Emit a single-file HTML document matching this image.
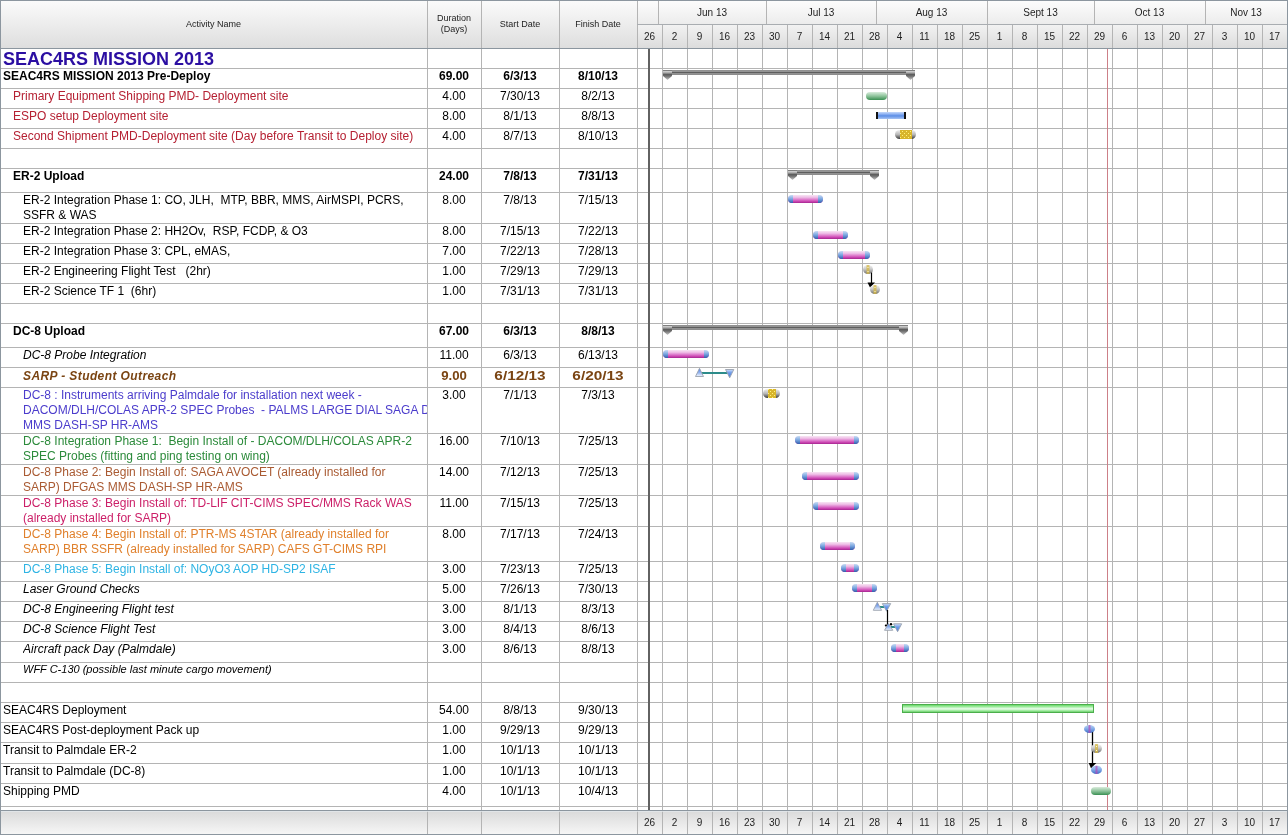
<!DOCTYPE html>
<html><head><meta charset="utf-8"><style>
html,body{margin:0;padding:0;}
body{width:1288px;height:835px;position:relative;overflow:hidden;background:#fff;font-family:"Liberation Sans",sans-serif;font-size:12px;color:#000;}
.a{position:absolute;}
.hl{position:absolute;height:1px;background:#b4b4b4;}
.vl{position:absolute;width:1px;background:#b4b4b4;}
.t{position:absolute;white-space:nowrap;line-height:15px;}
.c{position:absolute;text-align:center;line-height:15px;white-space:nowrap;}
.hd{position:absolute;font-size:9px;color:#1e1e1e;text-align:center;white-space:nowrap;line-height:11px;}
.t,.c,.hd{will-change:transform;}
</style></head><body>

<div class="a" style="left:0;top:0;width:1288px;height:48px;background:linear-gradient(#fbfbfb,#dedede);"></div>
<div class="a" style="left:638px;top:1px;width:650px;height:23px;background:linear-gradient(#fcfcfc,#ececec);"></div>
<div class="a" style="left:638px;top:25px;width:650px;height:23px;background:linear-gradient(#f2f2f2,#dcdcdc);"></div>
<div class="a" style="left:0;top:810px;width:1288px;height:25px;background:linear-gradient(#d9d9d9,#f7f7f7);"></div>
<div class="hl" style="left:0;top:48px;width:1288px;"></div>
<div class="hl" style="left:0;top:68px;width:1288px;"></div>
<div class="hl" style="left:0;top:88px;width:1288px;"></div>
<div class="hl" style="left:0;top:108px;width:1288px;"></div>
<div class="hl" style="left:0;top:128px;width:1288px;"></div>
<div class="hl" style="left:0;top:148px;width:1288px;"></div>
<div class="hl" style="left:0;top:168px;width:1288px;"></div>
<div class="hl" style="left:0;top:192px;width:1288px;"></div>
<div class="hl" style="left:0;top:223px;width:1288px;"></div>
<div class="hl" style="left:0;top:243px;width:1288px;"></div>
<div class="hl" style="left:0;top:263px;width:1288px;"></div>
<div class="hl" style="left:0;top:283px;width:1288px;"></div>
<div class="hl" style="left:0;top:303px;width:1288px;"></div>
<div class="hl" style="left:0;top:323px;width:1288px;"></div>
<div class="hl" style="left:0;top:347px;width:1288px;"></div>
<div class="hl" style="left:0;top:367px;width:1288px;"></div>
<div class="hl" style="left:0;top:387px;width:1288px;"></div>
<div class="hl" style="left:0;top:433px;width:1288px;"></div>
<div class="hl" style="left:0;top:464px;width:1288px;"></div>
<div class="hl" style="left:0;top:495px;width:1288px;"></div>
<div class="hl" style="left:0;top:526px;width:1288px;"></div>
<div class="hl" style="left:0;top:561px;width:1288px;"></div>
<div class="hl" style="left:0;top:581px;width:1288px;"></div>
<div class="hl" style="left:0;top:601px;width:1288px;"></div>
<div class="hl" style="left:0;top:621px;width:1288px;"></div>
<div class="hl" style="left:0;top:641px;width:1288px;"></div>
<div class="hl" style="left:0;top:662px;width:1288px;"></div>
<div class="hl" style="left:0;top:682px;width:1288px;"></div>
<div class="hl" style="left:0;top:702px;width:1288px;"></div>
<div class="hl" style="left:0;top:722px;width:1288px;"></div>
<div class="hl" style="left:0;top:742px;width:1288px;"></div>
<div class="hl" style="left:0;top:763px;width:1288px;"></div>
<div class="hl" style="left:0;top:783px;width:1288px;"></div>
<div class="hl" style="left:0;top:806px;width:1288px;"></div>
<div class="vl" style="left:427px;top:1px;height:834px;"></div>
<div class="vl" style="left:481px;top:1px;height:834px;"></div>
<div class="vl" style="left:559px;top:1px;height:834px;"></div>
<div class="vl" style="left:637px;top:1px;height:834px;"></div>
<div class="vl" style="left:662px;top:25px;height:810px;"></div>
<div class="vl" style="left:687px;top:25px;height:810px;"></div>
<div class="vl" style="left:712px;top:25px;height:810px;"></div>
<div class="vl" style="left:737px;top:25px;height:810px;"></div>
<div class="vl" style="left:762px;top:25px;height:810px;"></div>
<div class="vl" style="left:787px;top:25px;height:810px;"></div>
<div class="vl" style="left:812px;top:25px;height:810px;"></div>
<div class="vl" style="left:837px;top:25px;height:810px;"></div>
<div class="vl" style="left:862px;top:25px;height:810px;"></div>
<div class="vl" style="left:887px;top:25px;height:810px;"></div>
<div class="vl" style="left:912px;top:25px;height:810px;"></div>
<div class="vl" style="left:937px;top:25px;height:810px;"></div>
<div class="vl" style="left:962px;top:25px;height:810px;"></div>
<div class="vl" style="left:987px;top:25px;height:810px;"></div>
<div class="vl" style="left:1012px;top:25px;height:810px;"></div>
<div class="vl" style="left:1037px;top:25px;height:810px;"></div>
<div class="vl" style="left:1062px;top:25px;height:810px;"></div>
<div class="vl" style="left:1087px;top:25px;height:810px;"></div>
<div class="vl" style="left:1112px;top:25px;height:810px;"></div>
<div class="vl" style="left:1137px;top:25px;height:810px;"></div>
<div class="vl" style="left:1162px;top:25px;height:810px;"></div>
<div class="vl" style="left:1187px;top:25px;height:810px;"></div>
<div class="vl" style="left:1212px;top:25px;height:810px;"></div>
<div class="vl" style="left:1237px;top:25px;height:810px;"></div>
<div class="vl" style="left:1262px;top:25px;height:810px;"></div>
<div class="vl" style="left:658px;top:1px;height:23px;"></div>
<div class="vl" style="left:766px;top:1px;height:23px;"></div>
<div class="vl" style="left:876px;top:1px;height:23px;"></div>
<div class="vl" style="left:987px;top:1px;height:23px;"></div>
<div class="vl" style="left:1094px;top:1px;height:23px;"></div>
<div class="vl" style="left:1205px;top:1px;height:23px;"></div>
<div class="hl" style="left:637px;top:24px;width:651px;background:#a9adb1;"></div>
<div class="a" style="left:0;top:0;width:1288px;height:1px;background:#8c969f;"></div>
<div class="a" style="left:0;top:48px;width:1288px;height:1px;background:#8c969f;"></div>
<div class="a" style="left:0;top:810px;width:1288px;height:1px;background:#8c969f;"></div>
<div class="a" style="left:1px;top:811px;width:1286px;height:1px;background:rgba(228,233,238,0.7);"></div>
<div class="a" style="left:0;top:834px;width:1288px;height:1px;background:#8c969f;"></div>
<div class="a" style="left:0;top:0;width:1px;height:835px;background:#8c969f;"></div>
<div class="a" style="left:1287px;top:0;width:1px;height:835px;background:#8c969f;"></div>
<div class="hd" style="left:0;top:19px;width:427px;">Activity Name</div>
<div class="hd" style="left:427px;top:13px;width:54px;">Duration<br>(Days)</div>
<div class="hd" style="left:481px;top:19px;width:78px;">Start Date</div>
<div class="hd" style="left:559px;top:19px;width:78px;">Finish Date</div>
<div class="hd" style="left:658px;top:7px;width:108px;font-size:10px;line-height:12px;">Jun 13</div>
<div class="hd" style="left:766px;top:7px;width:110px;font-size:10px;line-height:12px;">Jul 13</div>
<div class="hd" style="left:876px;top:7px;width:111px;font-size:10px;line-height:12px;">Aug 13</div>
<div class="hd" style="left:987px;top:7px;width:107px;font-size:10px;line-height:12px;">Sept 13</div>
<div class="hd" style="left:1094px;top:7px;width:111px;font-size:10px;line-height:12px;">Oct 13</div>
<div class="hd" style="left:1205px;top:7px;width:82px;font-size:10px;line-height:12px;">Nov 13</div>
<div class="hd" style="left:637px;top:31px;width:25px;font-size:10px;line-height:12px;">26</div>
<div class="hd" style="left:637px;top:817px;width:25px;font-size:10px;line-height:12px;">26</div>
<div class="hd" style="left:662px;top:31px;width:25px;font-size:10px;line-height:12px;">2</div>
<div class="hd" style="left:662px;top:817px;width:25px;font-size:10px;line-height:12px;">2</div>
<div class="hd" style="left:687px;top:31px;width:25px;font-size:10px;line-height:12px;">9</div>
<div class="hd" style="left:687px;top:817px;width:25px;font-size:10px;line-height:12px;">9</div>
<div class="hd" style="left:712px;top:31px;width:25px;font-size:10px;line-height:12px;">16</div>
<div class="hd" style="left:712px;top:817px;width:25px;font-size:10px;line-height:12px;">16</div>
<div class="hd" style="left:737px;top:31px;width:25px;font-size:10px;line-height:12px;">23</div>
<div class="hd" style="left:737px;top:817px;width:25px;font-size:10px;line-height:12px;">23</div>
<div class="hd" style="left:762px;top:31px;width:25px;font-size:10px;line-height:12px;">30</div>
<div class="hd" style="left:762px;top:817px;width:25px;font-size:10px;line-height:12px;">30</div>
<div class="hd" style="left:787px;top:31px;width:25px;font-size:10px;line-height:12px;">7</div>
<div class="hd" style="left:787px;top:817px;width:25px;font-size:10px;line-height:12px;">7</div>
<div class="hd" style="left:812px;top:31px;width:25px;font-size:10px;line-height:12px;">14</div>
<div class="hd" style="left:812px;top:817px;width:25px;font-size:10px;line-height:12px;">14</div>
<div class="hd" style="left:837px;top:31px;width:25px;font-size:10px;line-height:12px;">21</div>
<div class="hd" style="left:837px;top:817px;width:25px;font-size:10px;line-height:12px;">21</div>
<div class="hd" style="left:862px;top:31px;width:25px;font-size:10px;line-height:12px;">28</div>
<div class="hd" style="left:862px;top:817px;width:25px;font-size:10px;line-height:12px;">28</div>
<div class="hd" style="left:887px;top:31px;width:25px;font-size:10px;line-height:12px;">4</div>
<div class="hd" style="left:887px;top:817px;width:25px;font-size:10px;line-height:12px;">4</div>
<div class="hd" style="left:912px;top:31px;width:25px;font-size:10px;line-height:12px;">11</div>
<div class="hd" style="left:912px;top:817px;width:25px;font-size:10px;line-height:12px;">11</div>
<div class="hd" style="left:937px;top:31px;width:25px;font-size:10px;line-height:12px;">18</div>
<div class="hd" style="left:937px;top:817px;width:25px;font-size:10px;line-height:12px;">18</div>
<div class="hd" style="left:962px;top:31px;width:25px;font-size:10px;line-height:12px;">25</div>
<div class="hd" style="left:962px;top:817px;width:25px;font-size:10px;line-height:12px;">25</div>
<div class="hd" style="left:987px;top:31px;width:25px;font-size:10px;line-height:12px;">1</div>
<div class="hd" style="left:987px;top:817px;width:25px;font-size:10px;line-height:12px;">1</div>
<div class="hd" style="left:1012px;top:31px;width:25px;font-size:10px;line-height:12px;">8</div>
<div class="hd" style="left:1012px;top:817px;width:25px;font-size:10px;line-height:12px;">8</div>
<div class="hd" style="left:1037px;top:31px;width:25px;font-size:10px;line-height:12px;">15</div>
<div class="hd" style="left:1037px;top:817px;width:25px;font-size:10px;line-height:12px;">15</div>
<div class="hd" style="left:1062px;top:31px;width:25px;font-size:10px;line-height:12px;">22</div>
<div class="hd" style="left:1062px;top:817px;width:25px;font-size:10px;line-height:12px;">22</div>
<div class="hd" style="left:1087px;top:31px;width:25px;font-size:10px;line-height:12px;">29</div>
<div class="hd" style="left:1087px;top:817px;width:25px;font-size:10px;line-height:12px;">29</div>
<div class="hd" style="left:1112px;top:31px;width:25px;font-size:10px;line-height:12px;">6</div>
<div class="hd" style="left:1112px;top:817px;width:25px;font-size:10px;line-height:12px;">6</div>
<div class="hd" style="left:1137px;top:31px;width:25px;font-size:10px;line-height:12px;">13</div>
<div class="hd" style="left:1137px;top:817px;width:25px;font-size:10px;line-height:12px;">13</div>
<div class="hd" style="left:1162px;top:31px;width:25px;font-size:10px;line-height:12px;">20</div>
<div class="hd" style="left:1162px;top:817px;width:25px;font-size:10px;line-height:12px;">20</div>
<div class="hd" style="left:1187px;top:31px;width:25px;font-size:10px;line-height:12px;">27</div>
<div class="hd" style="left:1187px;top:817px;width:25px;font-size:10px;line-height:12px;">27</div>
<div class="hd" style="left:1212px;top:31px;width:25px;font-size:10px;line-height:12px;">3</div>
<div class="hd" style="left:1212px;top:817px;width:25px;font-size:10px;line-height:12px;">3</div>
<div class="hd" style="left:1237px;top:31px;width:25px;font-size:10px;line-height:12px;">10</div>
<div class="hd" style="left:1237px;top:817px;width:25px;font-size:10px;line-height:12px;">10</div>
<div class="hd" style="left:1262px;top:31px;width:25px;font-size:10px;line-height:12px;">17</div>
<div class="hd" style="left:1262px;top:817px;width:25px;font-size:10px;line-height:12px;">17</div>
<div class="t" style="left:3px;top:49px;font-weight:bold;font-size:18px;color:#2b0ea2;line-height:20px;">SEAC4RS MISSION 2013</div>
<div class="t" style="left:3px;top:69px;width:424px;overflow:hidden;font-weight:bold;color:#000;">SEAC4RS MISSION 2013 Pre-Deploy</div>
<div class="c" style="left:427px;top:69px;width:54px;font-weight:bold;color:#000;">69.00</div>
<div class="c" style="left:481px;top:69px;width:78px;font-weight:bold;color:#000;">6/3/13</div>
<div class="c" style="left:559px;top:69px;width:78px;font-weight:bold;color:#000;">8/10/13</div>
<div class="t" style="left:13px;top:89px;width:414px;overflow:hidden;color:#b52032;">Primary Equipment Shipping PMD- Deployment site</div>
<div class="c" style="left:427px;top:89px;width:54px;color:#000;">4.00</div>
<div class="c" style="left:481px;top:89px;width:78px;color:#000;">7/30/13</div>
<div class="c" style="left:559px;top:89px;width:78px;color:#000;">8/2/13</div>
<div class="t" style="left:13px;top:109px;width:414px;overflow:hidden;color:#b52032;">ESPO setup Deployment site</div>
<div class="c" style="left:427px;top:109px;width:54px;color:#000;">8.00</div>
<div class="c" style="left:481px;top:109px;width:78px;color:#000;">8/1/13</div>
<div class="c" style="left:559px;top:109px;width:78px;color:#000;">8/8/13</div>
<div class="t" style="left:13px;top:129px;width:414px;overflow:hidden;color:#b52032;">Second Shipment PMD-Deployment site (Day before Transit to Deploy site)</div>
<div class="c" style="left:427px;top:129px;width:54px;color:#000;">4.00</div>
<div class="c" style="left:481px;top:129px;width:78px;color:#000;">8/7/13</div>
<div class="c" style="left:559px;top:129px;width:78px;color:#000;">8/10/13</div>
<div class="t" style="left:13px;top:169px;width:414px;overflow:hidden;font-weight:bold;color:#000;">ER-2 Upload</div>
<div class="c" style="left:427px;top:169px;width:54px;font-weight:bold;color:#000;">24.00</div>
<div class="c" style="left:481px;top:169px;width:78px;font-weight:bold;color:#000;">7/8/13</div>
<div class="c" style="left:559px;top:169px;width:78px;font-weight:bold;color:#000;">7/31/13</div>
<div class="t" style="left:23px;top:193px;width:404px;overflow:hidden;color:#000;">ER-2 Integration Phase 1: CO, JLH,&nbsp; MTP, BBR, MMS, AirMSPI, PCRS,<br>SSFR &amp; WAS</div>
<div class="c" style="left:427px;top:193px;width:54px;color:#000;">8.00</div>
<div class="c" style="left:481px;top:193px;width:78px;color:#000;">7/8/13</div>
<div class="c" style="left:559px;top:193px;width:78px;color:#000;">7/15/13</div>
<div class="t" style="left:23px;top:224px;width:404px;overflow:hidden;color:#000;">ER-2 Integration Phase 2: HH2Ov,&nbsp; RSP, FCDP, &amp; O3</div>
<div class="c" style="left:427px;top:224px;width:54px;color:#000;">8.00</div>
<div class="c" style="left:481px;top:224px;width:78px;color:#000;">7/15/13</div>
<div class="c" style="left:559px;top:224px;width:78px;color:#000;">7/22/13</div>
<div class="t" style="left:23px;top:244px;width:404px;overflow:hidden;color:#000;">ER-2 Integration Phase 3: CPL, eMAS,</div>
<div class="c" style="left:427px;top:244px;width:54px;color:#000;">7.00</div>
<div class="c" style="left:481px;top:244px;width:78px;color:#000;">7/22/13</div>
<div class="c" style="left:559px;top:244px;width:78px;color:#000;">7/28/13</div>
<div class="t" style="left:23px;top:264px;width:404px;overflow:hidden;color:#000;">ER-2 Engineering Flight Test &nbsp; (2hr)</div>
<div class="c" style="left:427px;top:264px;width:54px;color:#000;">1.00</div>
<div class="c" style="left:481px;top:264px;width:78px;color:#000;">7/29/13</div>
<div class="c" style="left:559px;top:264px;width:78px;color:#000;">7/29/13</div>
<div class="t" style="left:23px;top:284px;width:404px;overflow:hidden;color:#000;">ER-2 Science TF 1&nbsp; (6hr)</div>
<div class="c" style="left:427px;top:284px;width:54px;color:#000;">1.00</div>
<div class="c" style="left:481px;top:284px;width:78px;color:#000;">7/31/13</div>
<div class="c" style="left:559px;top:284px;width:78px;color:#000;">7/31/13</div>
<div class="t" style="left:13px;top:324px;width:414px;overflow:hidden;font-weight:bold;color:#000;">DC-8 Upload</div>
<div class="c" style="left:427px;top:324px;width:54px;font-weight:bold;color:#000;">67.00</div>
<div class="c" style="left:481px;top:324px;width:78px;font-weight:bold;color:#000;">6/3/13</div>
<div class="c" style="left:559px;top:324px;width:78px;font-weight:bold;color:#000;">8/8/13</div>
<div class="t" style="left:23px;top:348px;width:404px;overflow:hidden;font-style:italic;color:#000;">DC-8 Probe Integration</div>
<div class="c" style="left:427px;top:348px;width:54px;color:#000;">11.00</div>
<div class="c" style="left:481px;top:348px;width:78px;color:#000;">6/3/13</div>
<div class="c" style="left:559px;top:348px;width:78px;color:#000;">6/13/13</div>
<div class="t" style="left:23px;top:369px;width:404px;overflow:hidden;font-weight:bold;font-style:italic;letter-spacing:0.4px;color:#7a4412;">SARP - Student Outreach</div>
<div class="c" style="left:427px;top:369px;width:54px;font-weight:bold;color:#7a4412;transform:scaleX(1.1);">9.00</div>
<div class="c" style="left:481px;top:369px;width:78px;font-weight:bold;color:#7a4412;transform:scaleX(1.28);">6/12/13</div>
<div class="c" style="left:559px;top:369px;width:78px;font-weight:bold;color:#7a4412;transform:scaleX(1.28);">6/20/13</div>
<div class="t" style="left:23px;top:388px;width:404px;overflow:hidden;color:#4b3ccc;">DC-8 : Instruments arriving Palmdale for installation next week -<br>DACOM/DLH/COLAS APR-2 SPEC Probes&nbsp; - PALMS LARGE DIAL SAGA DFGAS<br>MMS DASH-SP HR-AMS</div>
<div class="c" style="left:427px;top:388px;width:54px;color:#000;">3.00</div>
<div class="c" style="left:481px;top:388px;width:78px;color:#000;">7/1/13</div>
<div class="c" style="left:559px;top:388px;width:78px;color:#000;">7/3/13</div>
<div class="t" style="left:23px;top:434px;width:404px;overflow:hidden;color:#2b8a3a;">DC-8 Integration Phase 1:&nbsp; Begin Install of - DACOM/DLH/COLAS APR-2<br>SPEC Probes (fitting and ping testing on wing)</div>
<div class="c" style="left:427px;top:434px;width:54px;color:#000;">16.00</div>
<div class="c" style="left:481px;top:434px;width:78px;color:#000;">7/10/13</div>
<div class="c" style="left:559px;top:434px;width:78px;color:#000;">7/25/13</div>
<div class="t" style="left:23px;top:465px;width:404px;overflow:hidden;color:#a95a32;">DC-8 Phase 2: Begin Install of: SAGA AVOCET (already installed for<br>SARP) DFGAS MMS DASH-SP HR-AMS</div>
<div class="c" style="left:427px;top:465px;width:54px;color:#000;">14.00</div>
<div class="c" style="left:481px;top:465px;width:78px;color:#000;">7/12/13</div>
<div class="c" style="left:559px;top:465px;width:78px;color:#000;">7/25/13</div>
<div class="t" style="left:23px;top:496px;width:404px;overflow:hidden;color:#cc1f68;">DC-8 Phase 3: Begin Install of: TD-LIF CIT-CIMS SPEC/MMS Rack WAS<br>(already installed for SARP)</div>
<div class="c" style="left:427px;top:496px;width:54px;color:#000;">11.00</div>
<div class="c" style="left:481px;top:496px;width:78px;color:#000;">7/15/13</div>
<div class="c" style="left:559px;top:496px;width:78px;color:#000;">7/25/13</div>
<div class="t" style="left:23px;top:527px;width:404px;overflow:hidden;color:#e0802c;">DC-8 Phase 4: Begin Install of: PTR-MS 4STAR (already installed for<br>SARP) BBR SSFR (already installed for SARP) CAFS GT-CIMS RPI</div>
<div class="c" style="left:427px;top:527px;width:54px;color:#000;">8.00</div>
<div class="c" style="left:481px;top:527px;width:78px;color:#000;">7/17/13</div>
<div class="c" style="left:559px;top:527px;width:78px;color:#000;">7/24/13</div>
<div class="t" style="left:23px;top:562px;width:404px;overflow:hidden;color:#2eb4e4;">DC-8 Phase 5: Begin Install of: NOyO3 AOP HD-SP2 ISAF</div>
<div class="c" style="left:427px;top:562px;width:54px;color:#000;">3.00</div>
<div class="c" style="left:481px;top:562px;width:78px;color:#000;">7/23/13</div>
<div class="c" style="left:559px;top:562px;width:78px;color:#000;">7/25/13</div>
<div class="t" style="left:23px;top:582px;width:404px;overflow:hidden;font-style:italic;color:#000;">Laser Ground Checks</div>
<div class="c" style="left:427px;top:582px;width:54px;color:#000;">5.00</div>
<div class="c" style="left:481px;top:582px;width:78px;color:#000;">7/26/13</div>
<div class="c" style="left:559px;top:582px;width:78px;color:#000;">7/30/13</div>
<div class="t" style="left:23px;top:602px;width:404px;overflow:hidden;font-style:italic;color:#000;">DC-8 Engineering Flight test</div>
<div class="c" style="left:427px;top:602px;width:54px;color:#000;">3.00</div>
<div class="c" style="left:481px;top:602px;width:78px;color:#000;">8/1/13</div>
<div class="c" style="left:559px;top:602px;width:78px;color:#000;">8/3/13</div>
<div class="t" style="left:23px;top:622px;width:404px;overflow:hidden;font-style:italic;color:#000;">DC-8 Science Flight Test</div>
<div class="c" style="left:427px;top:622px;width:54px;color:#000;">3.00</div>
<div class="c" style="left:481px;top:622px;width:78px;color:#000;">8/4/13</div>
<div class="c" style="left:559px;top:622px;width:78px;color:#000;">8/6/13</div>
<div class="t" style="left:23px;top:642px;width:404px;overflow:hidden;font-style:italic;color:#000;">Aircraft pack Day (Palmdale)</div>
<div class="c" style="left:427px;top:642px;width:54px;color:#000;">3.00</div>
<div class="c" style="left:481px;top:642px;width:78px;color:#000;">8/6/13</div>
<div class="c" style="left:559px;top:642px;width:78px;color:#000;">8/8/13</div>
<div class="t" style="left:23px;top:662px;width:404px;overflow:hidden;font-style:italic;font-size:11px;color:#000;">WFF C-130 (possible last minute cargo movement)</div>
<div class="t" style="left:3px;top:703px;width:424px;overflow:hidden;color:#000;">SEAC4RS Deployment</div>
<div class="c" style="left:427px;top:703px;width:54px;color:#000;">54.00</div>
<div class="c" style="left:481px;top:703px;width:78px;color:#000;">8/8/13</div>
<div class="c" style="left:559px;top:703px;width:78px;color:#000;">9/30/13</div>
<div class="t" style="left:3px;top:723px;width:424px;overflow:hidden;color:#000;">SEAC4RS Post-deployment Pack up</div>
<div class="c" style="left:427px;top:723px;width:54px;color:#000;">1.00</div>
<div class="c" style="left:481px;top:723px;width:78px;color:#000;">9/29/13</div>
<div class="c" style="left:559px;top:723px;width:78px;color:#000;">9/29/13</div>
<div class="t" style="left:3px;top:743px;width:424px;overflow:hidden;color:#000;">Transit to Palmdale ER-2</div>
<div class="c" style="left:427px;top:743px;width:54px;color:#000;">1.00</div>
<div class="c" style="left:481px;top:743px;width:78px;color:#000;">10/1/13</div>
<div class="c" style="left:559px;top:743px;width:78px;color:#000;">10/1/13</div>
<div class="t" style="left:3px;top:764px;width:424px;overflow:hidden;color:#000;">Transit to Palmdale (DC-8)</div>
<div class="c" style="left:427px;top:764px;width:54px;color:#000;">1.00</div>
<div class="c" style="left:481px;top:764px;width:78px;color:#000;">10/1/13</div>
<div class="c" style="left:559px;top:764px;width:78px;color:#000;">10/1/13</div>
<div class="t" style="left:3px;top:784px;width:424px;overflow:hidden;color:#000;">Shipping PMD</div>
<div class="c" style="left:427px;top:784px;width:54px;color:#000;">4.00</div>
<div class="c" style="left:481px;top:784px;width:78px;color:#000;">10/1/13</div>
<div class="c" style="left:559px;top:784px;width:78px;color:#000;">10/4/13</div>
<div class="a" style="left:648px;top:49px;width:2px;height:761px;background:#626262;"></div>
<div class="a" style="left:1107px;top:49px;width:1px;height:761px;background:#cd8088;"></div>
<svg class="a" style="left:0;top:0;" width="1288" height="835" viewBox="0 0 1288 835">
<defs>
<linearGradient id="gPink" x1="0" y1="0" x2="0" y2="1">
 <stop offset="0" stop-color="#f8e6f4"/><stop offset="0.3" stop-color="#eebce6"/><stop offset="0.65" stop-color="#d868c4"/><stop offset="0.88" stop-color="#c234a6"/><stop offset="1" stop-color="#9c2a8c"/>
</linearGradient>
<linearGradient id="gBlueCap" x1="0" y1="0" x2="0" y2="1">
 <stop offset="0" stop-color="#c8dcf4"/><stop offset="0.5" stop-color="#7aa6e0"/><stop offset="1" stop-color="#2f5fae"/>
</linearGradient>
<linearGradient id="gGreen" x1="0" y1="0" x2="0" y2="1">
 <stop offset="0" stop-color="#d9ecdc"/><stop offset="0.5" stop-color="#8fc49c"/><stop offset="1" stop-color="#3a8f52"/>
</linearGradient>
<linearGradient id="gEspo" x1="0" y1="0" x2="0" y2="1">
 <stop offset="0" stop-color="#c4d8fa"/><stop offset="0.3" stop-color="#8fb2f2"/><stop offset="0.55" stop-color="#5c8ee6"/><stop offset="1" stop-color="#a8c4f4"/>
</linearGradient>
<linearGradient id="gGrayCap" x1="0" y1="0" x2="0" y2="1">
 <stop offset="0" stop-color="#f0f0f0"/><stop offset="0.5" stop-color="#b8b8b8"/><stop offset="1" stop-color="#3c3c3c"/>
</linearGradient>
<linearGradient id="gSum" x1="0" y1="0" x2="0" y2="1">
 <stop offset="0" stop-color="#828282"/><stop offset="0.2" stop-color="#a0a0a0"/><stop offset="0.4" stop-color="#888888"/><stop offset="0.5" stop-color="#5e5e5e"/><stop offset="0.62" stop-color="#8a8a8a"/><stop offset="0.8" stop-color="#9c9c9c"/><stop offset="1" stop-color="#7e7e7e"/>
</linearGradient>
<linearGradient id="gMark" x1="0" y1="0" x2="0" y2="1">
 <stop offset="0" stop-color="#6a6a6a"/><stop offset="0.08" stop-color="#8c8c8c"/><stop offset="0.14" stop-color="#cccccc"/><stop offset="0.28" stop-color="#a6a6a6"/><stop offset="0.45" stop-color="#5e5e5e"/><stop offset="0.6" stop-color="#6e6e6e"/><stop offset="0.8" stop-color="#999999"/><stop offset="1" stop-color="#c8c8c8"/>
</linearGradient>
<linearGradient id="gTube" x1="0" y1="0" x2="0" y2="1">
 <stop offset="0" stop-color="#5cd05c"/><stop offset="0.2" stop-color="#8ae68a"/><stop offset="0.55" stop-color="#eefdee"/><stop offset="0.8" stop-color="#94e894"/><stop offset="1" stop-color="#5cc05c"/>
</linearGradient>
<linearGradient id="gTriUp" x1="0" y1="0" x2="0" y2="1">
 <stop offset="0" stop-color="#4a7ee4"/><stop offset="0.5" stop-color="#8eb0ee"/><stop offset="1" stop-color="#f4f8ff"/>
</linearGradient>
<linearGradient id="gTriDn" x1="0" y1="0" x2="0" y2="1">
 <stop offset="0" stop-color="#d0e0fa"/><stop offset="0.4" stop-color="#6e9cec"/><stop offset="1" stop-color="#4a7ee0"/>
</linearGradient>
<linearGradient id="gEllBlue" x1="0" y1="0" x2="0" y2="1">
 <stop offset="0" stop-color="#b8d2f4"/><stop offset="0.5" stop-color="#80a8e6"/><stop offset="1" stop-color="#3e6ec6"/>
</linearGradient>
<linearGradient id="gEllGray" x1="0" y1="0" x2="0" y2="1">
 <stop offset="0" stop-color="#f4f4f4"/><stop offset="0.45" stop-color="#cacaca"/><stop offset="1" stop-color="#707070"/>
</linearGradient>
<pattern id="pDots" x="900" y="131" width="4" height="4" patternUnits="userSpaceOnUse">
 <rect width="4" height="4" fill="#d8b52c"/>
 <rect x="2" y="0" width="1" height="1" fill="#fff27a"/>
 <rect x="0" y="2" width="1" height="1" fill="#fff27a"/>
</pattern>
</defs>
<rect x="663" y="70" width="252" height="5" fill="url(#gSum)"/>
<path d="M663 70H672V76L667.5 80L663 76Z" fill="url(#gMark)"/>
<path d="M906 70H915V76L910.5 80L906 76Z" fill="url(#gMark)"/>
<rect x="866" y="92" width="21" height="8" rx="4" ry="4" fill="url(#gGreen)"/>
<rect x="876" y="112" width="30" height="7" fill="url(#gEspo)"/>
<rect x="876" y="112" width="2" height="7" fill="#111"/><rect x="904" y="112" width="2" height="7" fill="#111"/>
<clipPath id="d895_130"><rect x="895" y="130" width="21" height="9" rx="4.5" ry="4.5"/></clipPath>
<g clip-path="url(#d895_130)"><rect x="895" y="130" width="21" height="9" fill="url(#gGrayCap)"/>
<rect x="900" y="130" width="12" height="9" fill="url(#pDots)"/></g>
<rect x="788" y="170" width="91" height="5" fill="url(#gSum)"/>
<path d="M788 170H797V176L792.5 180L788 176Z" fill="url(#gMark)"/>
<path d="M870 170H879V176L874.5 180L870 176Z" fill="url(#gMark)"/>
<clipPath id="c788_195"><rect x="788" y="195" width="35" height="8" rx="4" ry="4"/></clipPath>
<g clip-path="url(#c788_195)"><rect x="788" y="195" width="35" height="8" fill="url(#gPink)"/>
<rect x="788" y="195" width="5" height="8" fill="url(#gBlueCap)"/>
<rect x="818" y="195" width="5" height="8" fill="url(#gBlueCap)"/></g>
<clipPath id="c813_231"><rect x="813" y="231" width="35" height="8" rx="4" ry="4"/></clipPath>
<g clip-path="url(#c813_231)"><rect x="813" y="231" width="35" height="8" fill="url(#gPink)"/>
<rect x="813" y="231" width="5" height="8" fill="url(#gBlueCap)"/>
<rect x="843" y="231" width="5" height="8" fill="url(#gBlueCap)"/></g>
<clipPath id="c838_251"><rect x="838" y="251" width="32" height="8" rx="4" ry="4"/></clipPath>
<g clip-path="url(#c838_251)"><rect x="838" y="251" width="32" height="8" fill="url(#gPink)"/>
<rect x="838" y="251" width="5" height="8" fill="url(#gBlueCap)"/>
<rect x="865" y="251" width="5" height="8" fill="url(#gBlueCap)"/></g>
<path d="M871.5 270V283" stroke="#000" stroke-width="1.2"/>
<path d="M867.5 282.5L875 282.5L870 287.5Z" fill="#000"/>
<clipPath id="g8630_2650"><ellipse cx="868" cy="269.5" rx="5" ry="4.5"/></clipPath>
<g clip-path="url(#g8630_2650)"><rect x="863" y="265" width="10" height="9" fill="url(#gEllGray)"/>
<rect x="866.5" y="265" width="3" height="9" fill="#d4b848" opacity="0.8"/>
<rect x="867.5" y="267" width="1" height="1" fill="#fffbd0"/>
<rect x="867.5" y="271" width="1" height="1" fill="#fffbd0"/></g>
<clipPath id="g8700_2850"><ellipse cx="875" cy="289.5" rx="5" ry="4.5"/></clipPath>
<g clip-path="url(#g8700_2850)"><rect x="870" y="285" width="10" height="9" fill="url(#gEllGray)"/>
<rect x="873.5" y="285" width="3" height="9" fill="#d4b848" opacity="0.8"/>
<rect x="874.5" y="287" width="1" height="1" fill="#fffbd0"/>
<rect x="874.5" y="291" width="1" height="1" fill="#fffbd0"/></g>
<rect x="663" y="325" width="245" height="5" fill="url(#gSum)"/>
<path d="M663 325H672V331L667.5 335L663 331Z" fill="url(#gMark)"/>
<path d="M899 325H908V331L903.5 335L899 331Z" fill="url(#gMark)"/>
<clipPath id="c663_350"><rect x="663" y="350" width="46" height="8" rx="4" ry="4"/></clipPath>
<g clip-path="url(#c663_350)"><rect x="663" y="350" width="46" height="8" fill="url(#gPink)"/>
<rect x="663" y="350" width="5" height="8" fill="url(#gBlueCap)"/>
<rect x="704" y="350" width="5" height="8" fill="url(#gBlueCap)"/></g>
<rect x="701" y="372" width="27" height="2" fill="#2c8c8a"/>
<path d="M699.5 368.3 L703.5 376.5 L695.5 376.5 Z" fill="url(#gTriUp)" stroke="#9aa2ae" stroke-width="0.9"/>
<path d="M725.5 369.5 L733.8 369.5 L729.7 377.8 Z" fill="url(#gTriDn)" stroke="#9aa2ae" stroke-width="0.9"/>
<clipPath id="d763_389"><rect x="763" y="389" width="17" height="9" rx="4.5" ry="4.5"/></clipPath>
<g clip-path="url(#d763_389)"><rect x="763" y="389" width="17" height="9" fill="url(#gGrayCap)"/>
<rect x="768" y="389" width="8" height="9" fill="url(#pDots)"/></g>
<clipPath id="c795_436"><rect x="795" y="436" width="64" height="8" rx="4" ry="4"/></clipPath>
<g clip-path="url(#c795_436)"><rect x="795" y="436" width="64" height="8" fill="url(#gPink)"/>
<rect x="795" y="436" width="5" height="8" fill="url(#gBlueCap)"/>
<rect x="854" y="436" width="5" height="8" fill="url(#gBlueCap)"/></g>
<clipPath id="c802_472"><rect x="802" y="472" width="57" height="8" rx="4" ry="4"/></clipPath>
<g clip-path="url(#c802_472)"><rect x="802" y="472" width="57" height="8" fill="url(#gPink)"/>
<rect x="802" y="472" width="5" height="8" fill="url(#gBlueCap)"/>
<rect x="854" y="472" width="5" height="8" fill="url(#gBlueCap)"/></g>
<clipPath id="c813_502"><rect x="813" y="502" width="46" height="8" rx="4" ry="4"/></clipPath>
<g clip-path="url(#c813_502)"><rect x="813" y="502" width="46" height="8" fill="url(#gPink)"/>
<rect x="813" y="502" width="5" height="8" fill="url(#gBlueCap)"/>
<rect x="854" y="502" width="5" height="8" fill="url(#gBlueCap)"/></g>
<clipPath id="c820_542"><rect x="820" y="542" width="35" height="8" rx="4" ry="4"/></clipPath>
<g clip-path="url(#c820_542)"><rect x="820" y="542" width="35" height="8" fill="url(#gPink)"/>
<rect x="820" y="542" width="5" height="8" fill="url(#gBlueCap)"/>
<rect x="850" y="542" width="5" height="8" fill="url(#gBlueCap)"/></g>
<clipPath id="c841_564"><rect x="841" y="564" width="18" height="8" rx="4" ry="4"/></clipPath>
<g clip-path="url(#c841_564)"><rect x="841" y="564" width="18" height="8" fill="url(#gPink)"/>
<rect x="841" y="564" width="5" height="8" fill="url(#gBlueCap)"/>
<rect x="854" y="564" width="5" height="8" fill="url(#gBlueCap)"/></g>
<clipPath id="c852_584"><rect x="852" y="584" width="25" height="8" rx="4" ry="4"/></clipPath>
<g clip-path="url(#c852_584)"><rect x="852" y="584" width="25" height="8" fill="url(#gPink)"/>
<rect x="852" y="584" width="5" height="8" fill="url(#gBlueCap)"/>
<rect x="872" y="584" width="5" height="8" fill="url(#gBlueCap)"/></g>
<rect x="880" y="606" width="4" height="2" fill="#2c8c8a"/>
<path d="M877.3 602.3 L881.6 610.3 L873.3 610.3 Z" fill="url(#gTriUp)" stroke="#9aa2ae" stroke-width="0.9"/>
<path d="M882.3 603.6 L890.7 603.6 L886.6 611.2 Z" fill="url(#gTriDn)" stroke="#9aa2ae" stroke-width="0.9"/>
<path d="M887.5 610V623.5Q887.5 625.5 886 626" stroke="#000" stroke-width="1.2" fill="none"/>
<circle cx="885.8" cy="625.6" r="1" fill="#000"/><circle cx="891" cy="624.3" r="1.2" fill="#000"/>
<rect x="891" y="626" width="4" height="2" fill="#2c8c8a"/>
<path d="M888.5 623.6 L892.8 630.3 L884.5 630.3 Z" fill="url(#gTriUp)" stroke="#9aa2ae" stroke-width="0.9"/>
<path d="M893.5 623.8 L901.7 623.8 L897.6 631.7 Z" fill="url(#gTriDn)" stroke="#9aa2ae" stroke-width="0.9"/>
<clipPath id="c891_644"><rect x="891" y="644" width="18" height="8" rx="4" ry="4"/></clipPath>
<g clip-path="url(#c891_644)"><rect x="891" y="644" width="18" height="8" fill="url(#gPink)"/>
<rect x="891" y="644" width="5" height="8" fill="url(#gBlueCap)"/>
<rect x="904" y="644" width="5" height="8" fill="url(#gBlueCap)"/></g>
<rect x="902.5" y="704.5" width="191" height="8" fill="url(#gTube)" stroke="#4cae4c" stroke-width="1"/>
<path d="M1092.5 730V764" stroke="#000" stroke-width="1.3"/>
<path d="M1088.7 763L1096.3 763L1091 768.3Z" fill="#000"/>
<clipPath id="e10840_7250"><ellipse cx="1089.5" cy="729" rx="5.5" ry="4"/></clipPath>
<g clip-path="url(#e10840_7250)"><rect x="1084" y="725" width="11" height="8" fill="url(#gEllBlue)"/>
<rect x="1088.5" y="725" width="2" height="8" fill="#b44cb8" opacity="0.7"/></g>
<clipPath id="g10910_7440"><ellipse cx="1096.5" cy="748.5" rx="5.5" ry="4.5"/></clipPath>
<g clip-path="url(#g10910_7440)"><rect x="1091" y="744" width="11" height="9" fill="url(#gEllGray)"/>
<rect x="1095" y="744" width="3" height="9" fill="#d4b848" opacity="0.8"/>
<rect x="1096" y="746" width="1" height="1" fill="#fffbd0"/>
<rect x="1096" y="750" width="1" height="1" fill="#fffbd0"/></g>
<clipPath id="e10910_7655"><ellipse cx="1096.5" cy="769.75" rx="5.5" ry="4.25"/></clipPath>
<g clip-path="url(#e10910_7655)"><rect x="1091" y="765.5" width="11" height="8.5" fill="url(#gEllBlue)"/>
<rect x="1095.5" y="765.5" width="2" height="8.5" fill="#b44cb8" opacity="0.7"/></g>
<rect x="1091" y="787" width="20" height="8" rx="4" ry="4" fill="url(#gGreen)"/>
</svg>
</body></html>
